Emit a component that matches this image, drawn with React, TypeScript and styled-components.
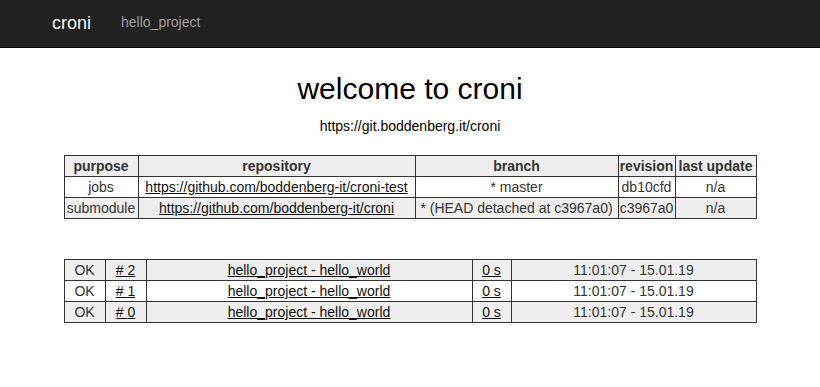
import React from "react";
import styled, { createGlobalStyle } from "styled-components";

const Global = createGlobalStyle`
  html, body { margin: 0; padding: 0; background: #fff; }
  body { font-family: "Liberation Sans", Arial, sans-serif; font-size: 14px; line-height: 20px; color: #333; }
`;

const Navbar = styled.nav`
  height: 47px;
  background: #222;
  border-bottom: 1px solid #080808;
  display: flex;
  align-items: center;
  padding-left: 52px;
  gap: 30px;
`;

const Brand = styled.span`
  font-size: 18px;
  color: #f2f2f2;
  margin-top: -1px;
`;

const NavLink = styled.span`
  font-size: 14px;
  color: #9d9d9d;
  margin-top: -3px;
`;

const Main = styled.main`
  display: flex;
  flex-direction: column;
  align-items: center;
`;

const Title = styled.h1`
  font-size: 30px;
  font-weight: normal;
  line-height: 33px;
  color: #000;
  margin: 24px 0 0;
`;

const Subtitle = styled.p`
  font-size: 14px;
  color: #000;
  margin: 11px 0 0;
`;

const Table = styled.table<{ $top: number }>`
  width: 692px;
  table-layout: fixed;
  border-collapse: collapse;
  margin-top: ${(p) => p.$top}px;
  tr:nth-child(odd) td, tr:nth-child(odd) th { background: #eee; }
`;

const Th = styled.th`
  border: 1px solid #333;
  padding: 0;
  font-weight: bold;
  text-align: center;
  line-height: 20px;
  white-space: nowrap;
  overflow: hidden;
`;

const Td = styled.td`
  border: 1px solid #333;
  padding: 0;
  text-align: center;
  line-height: 20px;
  white-space: nowrap;
  overflow: hidden;
`;

const A = styled.a`
  color: #111;
  text-decoration: underline;
`;

const repos = [
  { purpose: "jobs", repo: "https://github.com/boddenberg-it/croni-test", branch: "* master", rev: "db10cfd", upd: "n/a" },
  { purpose: "submodule", repo: "https://github.com/boddenberg-it/croni", branch: "* (HEAD detached at c3967a0)", rev: "c3967a0", upd: "n/a" },
];

const builds = [2, 1, 0];

export default function App() {
  return (
    <>
      <Global />
      <Navbar>
        <Brand>croni</Brand>
        <NavLink>hello_project</NavLink>
      </Navbar>
      <Main>
        <Title>welcome to croni</Title>
        <Subtitle>https://git.boddenberg.it/croni</Subtitle>
        <Table $top={19}>
          <colgroup>
            <col style={{ width: 74 }} />
            <col style={{ width: 277 }} />
            <col style={{ width: 203 }} />
            <col style={{ width: 57 }} />
            <col style={{ width: 81 }} />
          </colgroup>
          <tbody>
            <tr>
              <Th>purpose</Th>
              <Th>repository</Th>
              <Th>branch</Th>
              <Th>revision</Th>
              <Th>last update</Th>
            </tr>
            {repos.map((r) => (
              <tr key={r.purpose}>
                <Td>{r.purpose}</Td>
                <Td><A href="#">{r.repo}</A></Td>
                <Td>{r.branch}</Td>
                <Td>{r.rev}</Td>
                <Td>{r.upd}</Td>
              </tr>
            ))}
          </tbody>
        </Table>
        <Table $top={40}>
          <colgroup>
            <col style={{ width: 41 }} />
            <col style={{ width: 41 }} />
            <col style={{ width: 326 }} />
            <col style={{ width: 39 }} />
            <col style={{ width: 245 }} />
          </colgroup>
          <tbody>
            {builds.map((b) => (
              <tr key={b}>
                <Td>OK</Td>
                <Td><A href="#"># {b}</A></Td>
                <Td><A href="#">hello_project - hello_world</A></Td>
                <Td><A href="#">0 s</A></Td>
                <Td>11:01:07 - 15.01.19</Td>
              </tr>
            ))}
          </tbody>
        </Table>
      </Main>
    </>
  );
}
